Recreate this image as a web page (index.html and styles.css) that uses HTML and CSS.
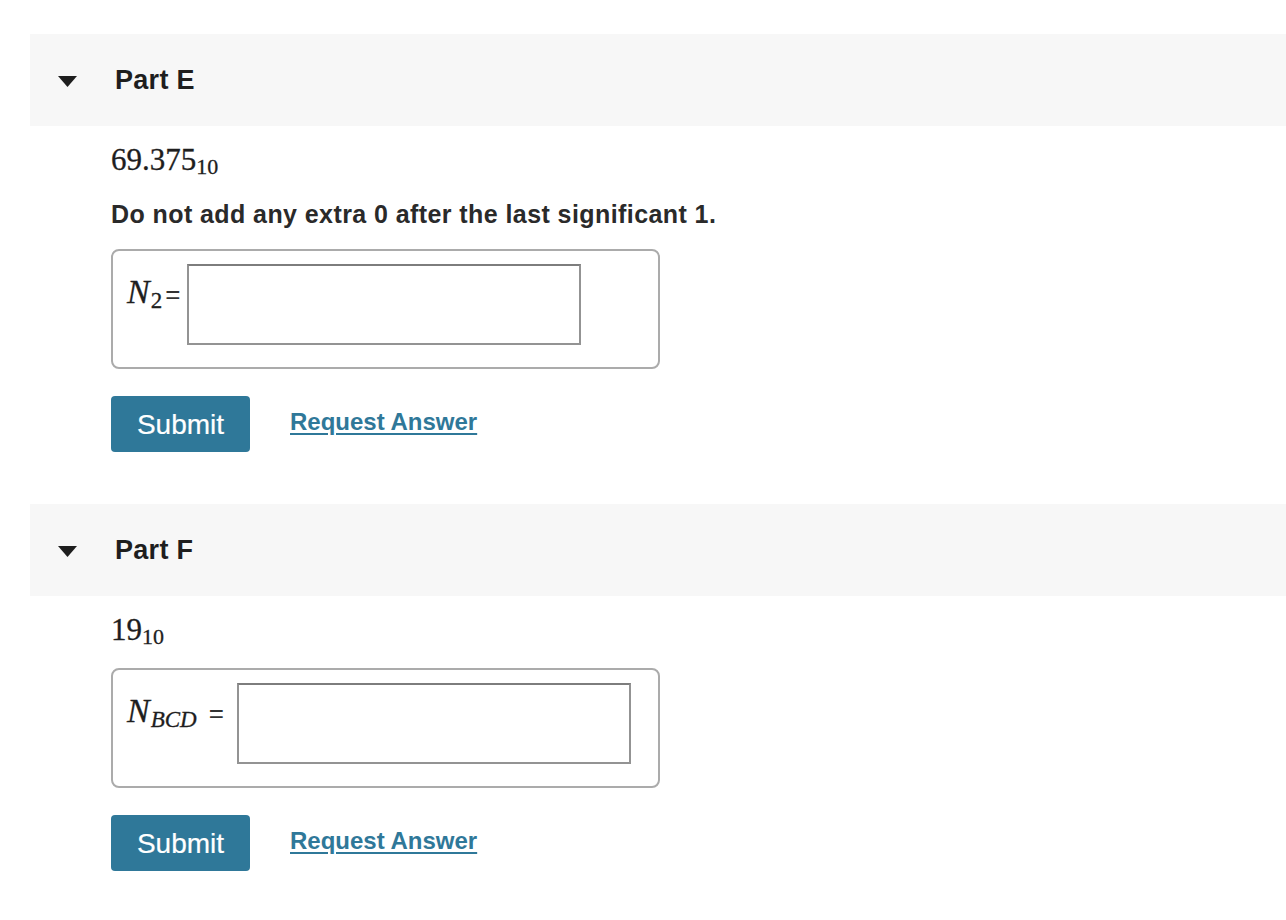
FILE: index.html
```html
<!DOCTYPE html>
<html>
<head>
<meta charset="utf-8">
<link rel="stylesheet" href="styles.css">
</head>
<body>
<div class="page">
  <section class="part">
    <div class="part-head">
      <svg class="caret" width="19" height="11" viewBox="0 0 19 11"><path d="M0 0 H19 L9.5 11 Z" fill="#1e1e1e"/></svg>
      <h2 class="part-title">Part E</h2>
    </div>
    <div class="part-body">
      <div class="math-line"><span class="num">69.375</span><sub class="base">10</sub></div>
      <p class="note">Do not add any extra 0 after the last significant 1.</p>
      <div class="answer-box">
        <span class="lbl"><i class="var">N</i><sub class="lsub">2</sub><span class="eq tight">=</span></span>
        <input class="answer-input answer-e" type="text">
      </div>
      <div class="actions">
        <button class="submit">Submit</button>
        <a class="request" href="#">Request Answer</a>
      </div>
    </div>
  </section>

  <section class="part part-f">
    <div class="part-head">
      <svg class="caret" width="19" height="11" viewBox="0 0 19 11"><path d="M0 0 H19 L9.5 11 Z" fill="#1e1e1e"/></svg>
      <h2 class="part-title">Part F</h2>
    </div>
    <div class="part-body">
      <div class="math-line"><span class="num">19</span><sub class="base">10</sub></div>
      <div class="answer-box">
        <span class="lbl"><i class="var">N</i><sub class="lsub italic">BCD</sub><span class="eq wide">=</span></span>
        <input class="answer-input answer-f" type="text">
      </div>
      <div class="actions">
        <button class="submit">Submit</button>
        <a class="request" href="#">Request Answer</a>
      </div>
    </div>
  </section>
</div>
</body>
</html>
```

FILE: styles.css
```css
html, body {
  margin: 0;
  padding: 0;
  background: #ffffff;
}

body {
  font-family: "Liberation Sans", Arial, sans-serif;
  color: #222222;
}

.page {
  padding-top: 34px;
  padding-left: 30px;
}

.part-head {
  height: 92px;
  background: #f7f7f7;
  display: flex;
  align-items: center;
  padding-left: 28px;
}

.caret {
  display: block;
  margin-top: 2px;
}

.part-title {
  margin: 0 0 0 38px;
  font-size: 27px;
  letter-spacing: 0.3px;
  font-weight: bold;
  color: #1e1e1e;
  line-height: 30px;
}

.part-body {
  padding-left: 81px;
  padding-top: 16px;
}

.math-line {
  font-family: "Liberation Serif", "Times New Roman", serif;
  font-size: 31px;
  line-height: 36px;
  height: 36px;
  color: #1e1e1e;
  -webkit-text-stroke: 0.3px #1e1e1e;
}

.base {
  font-size: 22px;
  vertical-align: -4px;
  line-height: 0;
}

.note {
  margin: 21px 0 0 0;
  font-size: 25px;
  letter-spacing: 0.42px;
  font-weight: bold;
  line-height: 30px;
  color: #2a2a2a;
}

.answer-box {
  margin-top: 20px;
  width: 545px;
  height: 116px;
  box-sizing: content-box;
  border: 2px solid #ababab;
  border-radius: 8px;
  display: flex;
  align-items: flex-start;
  padding: 0;
}

.lbl {
  display: flex;
  align-items: baseline;
  margin-left: 14px;
  margin-top: 22px;
  font-family: "Liberation Serif", "Times New Roman", serif;
  color: #1e1e1e;
  -webkit-text-stroke: 0.3px #1e1e1e;
}

.var {
  font-size: 34px;
  font-style: italic;
}

.lsub {
  font-size: 23px;
  position: relative;
  top: 5px;
  margin-left: 1px;
}

.lsub.italic {
  font-style: italic;
  font-size: 23px;
}

.eq {
  font-family: "Liberation Sans", Arial, sans-serif;
  font-size: 26px;
  color: #333;
  -webkit-text-stroke: 0;
}

.eq.tight {
  margin-left: 3px;
}

.eq.wide {
  margin-left: 12px;
}

.answer-input {
  margin-top: 13px;
  height: 81px;
  box-sizing: border-box;
  border: 2px solid #939393;
  border-top-color: #7d7d7d;
  background: #fff;
  padding: 0;
  outline: none;
}

.answer-e {
  width: 394px;
  margin-left: 7px;
}

.answer-f {
  width: 394px;
  margin-left: 13px;
}

.actions {
  margin-top: 27px;
  display: flex;
  align-items: center;
}

.submit {
  width: 139px;
  height: 56px;
  background: #2f7899;
  color: #ffffff;
  border: none;
  border-radius: 4px;
  font-family: "Liberation Sans", Arial, sans-serif;
  font-size: 28px;
  padding: 0;
  padding-top: 2px;
  -webkit-text-stroke: 0.2px #ffffff;
}

.request {
  margin-left: 40px;
  margin-top: -4px;
  font-size: 24px;
  font-weight: bold;
  color: #2f7899;
  text-decoration: underline;
  text-decoration-thickness: 2px;
  text-underline-offset: 3px;
}

.part-f {
  margin-top: 52px;
}
```
